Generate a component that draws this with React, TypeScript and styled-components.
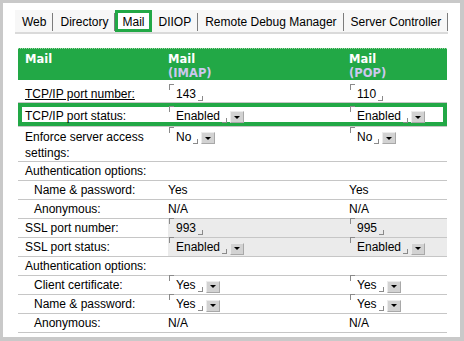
import styled, { createGlobalStyle } from 'styled-components';

const GlobalStyle = createGlobalStyle`
  html, body {
    margin: 0;
    padding: 0;
    background: #c8c8c8;
  }
  body {
    font-family: "Liberation Sans", Arial, sans-serif;
    color: #000;
  }
`;

const green = '#22a846';

const Frame = styled.div`
  width: 464px;
  height: 341px;
  box-sizing: border-box;
  border: 3px solid #c9c9c9;
  border-right-width: 4px;
  border-bottom: 4px solid #c9c9c9;
  background: #fff;
  overflow: hidden;
`;

const TabBar = styled.div`
  display: flex;
  margin: 7px 12px 0 12px;
  height: 22px;
  background: #f7f7f7;
  border-bottom: 2px solid #dadada;
`;

const Tab = styled.div<{ $active?: boolean }>`
  position: relative;
  display: flex;
  align-items: center;
  flex-shrink: 0;
  white-space: nowrap;
  padding: 2px 7px 0 7px;
  font-size: 12px;
  background: ${(p) => (p.$active ? '#fff' : 'transparent')};
  box-shadow: ${(p) => (p.$active ? `inset 0 0 0 3px ${green}` : 'none')};

  &::after {
    content: '';
    display: ${(p) => (p.$active ? 'none' : 'block')};
    position: absolute;
    right: 0;
    top: 3px;
    bottom: 1px;
    width: 1px;
    background: #7c7c7c;
  }
`;

const Table = styled.div`
  margin: 14px 13px 0 15px;
  display: flex;
  flex-direction: column;
`;

const HeaderRow = styled.div`
  display: grid;
  grid-template-columns: 150px 181px 1fr;
  height: 32px;
  box-sizing: border-box;
  background: ${green};
  border-top: 1px dotted #9ed6a8;
  padding-top: 3px;
  font-family: "DejaVu Sans", Verdana, sans-serif;
  font-weight: bold;
  font-size: 11.5px;
  line-height: 14px;
  color: #fff;
`;

const HeadCell = styled.div<{ $first?: boolean }>`
  padding-left: ${(p) => (p.$first ? '7px' : '0')};
`;

const Sub = styled.div`
  color: #ccc8ee;
`;

const Row = styled.div<{ $h?: number; $mark?: boolean; $top?: boolean; $pad?: number }>`
  display: grid;
  grid-template-columns: 150px 181px 1fr;
  height: ${(p) => p.$h ?? 19}px;
  box-sizing: border-box;
  align-items: ${(p) => (p.$top ? 'start' : 'center')};
  padding-top: ${(p) => p.$pad ?? 0}px;
  border-bottom: 1px solid #c6c6c6;
  font-size: 12px;
  line-height: 16px;
  box-shadow: ${(p) => (p.$mark ? `inset 0 0 0 4px ${green}` : 'none')};
`;

const Label = styled.div<{ $indent?: boolean; $link?: boolean }>`
  padding-left: ${(p) => (p.$indent ? '16px' : '7px')};
  text-decoration: ${(p) => (p.$link ? 'underline' : 'none')};
  white-space: nowrap;
`;

const Value = styled.div<{ $shade?: boolean; $top?: boolean }>`
  display: flex;
  align-items: ${(p) => (p.$top ? 'flex-start' : 'center')};
  height: 100%;
  white-space: nowrap;
  background: ${(p) => (p.$shade ? '#ebebeb' : 'transparent')};
`;

const Field = styled.span`
  position: relative;
  display: inline-block;
  padding: 0 8px 0 8px;
  line-height: 16px;

  &::before {
    content: '';
    position: absolute;
    left: 1px;
    top: -2px;
    width: 4px;
    height: 5px;
    border-left: 1px solid #8a8a8a;
    border-top: 1px solid #8a8a8a;
  }

  &::after {
    content: '';
    position: absolute;
    right: 1px;
    bottom: 1px;
    width: 4px;
    height: 4px;
    border-right: 1px solid #8a8a8a;
    border-bottom: 1px solid #8a8a8a;
  }
`;

const Drop = styled.span`
  display: inline-flex;
  align-items: center;
  justify-content: center;
  width: 12px;
  height: 10px;
  margin-left: 2px;
  margin-top: 3px;
  background: #d2d2d2;
  border: 1px solid #a8a8a8;
  border-top-color: #ececec;
  border-left-color: #ececec;

  &::after {
    content: '';
    border-left: 3px solid transparent;
    border-right: 3px solid transparent;
    border-top: 3px solid #000;
  }
`;

type Cell = { text?: string; field?: boolean; drop?: boolean };

type RowData = {
  label: React.ReactNode;
  indent?: boolean;
  link?: boolean;
  mark?: boolean;
  h?: number;
  pad?: number;
  top?: boolean;
  shade?: boolean;
  imap: Cell;
  pop: Cell;
};

const rows: RowData[] = [
  {
    label: 'TCP/IP port number:',
    link: true,
    h: 23,
    pad: 6,
    imap: { text: '143', field: true },
    pop: { text: '110', field: true },
  },
  {
    label: 'TCP/IP port status:',
    mark: true,
    h: 24,
    pad: 2,
    imap: { text: 'Enabled', field: true, drop: true },
    pop: { text: 'Enabled', field: true, drop: true },
  },
  {
    label: (
      <>
        Enforce server access
        <br />
        settings:
      </>
    ),
    h: 35,
    pad: 2,
    top: true,
    imap: { text: 'No', field: true, drop: true },
    pop: { text: 'No', field: true, drop: true },
  },
  { label: 'Authentication options:', imap: {}, pop: {} },
  { label: 'Name & password:', indent: true, imap: { text: 'Yes' }, pop: { text: 'Yes' } },
  { label: 'Anonymous:', indent: true, imap: { text: 'N/A' }, pop: { text: 'N/A' } },
  { label: 'SSL port number:', shade: true, imap: { text: '993', field: true }, pop: { text: '995', field: true } },
  {
    label: 'SSL port status:',
    shade: true,
    imap: { text: 'Enabled', field: true, drop: true },
    pop: { text: 'Enabled', field: true, drop: true },
  },
  { label: 'Authentication options:', imap: {}, pop: {} },
  {
    label: 'Client certificate:',
    indent: true,
    imap: { text: 'Yes', field: true, drop: true },
    pop: { text: 'Yes', field: true, drop: true },
  },
  {
    label: 'Name & password:',
    indent: true,
    imap: { text: 'Yes', field: true, drop: true },
    pop: { text: 'Yes', field: true, drop: true },
  },
  { label: 'Anonymous:', indent: true, imap: { text: 'N/A' }, pop: { text: 'N/A' } },
];

const tabs = ['Web', 'Directory', 'Mail', 'DIIOP', 'Remote Debug Manager', 'Server Controller'];

const renderCell = (c: Cell, shade?: boolean, top?: boolean) => (
  <Value $shade={shade} $top={top}>
    {c.field ? <Field>{c.text}</Field> : c.text}
    {c.drop && <Drop />}
  </Value>
);

export default function App() {
  return (
    <>
      <GlobalStyle />
      <Frame>
        <TabBar>
          {tabs.map((t) => (
            <Tab key={t} $active={t === 'Mail'}>
              {t}
            </Tab>
          ))}
        </TabBar>
        <Table>
          <HeaderRow>
            <HeadCell $first>Mail</HeadCell>
            <HeadCell>
              Mail
              <Sub>(IMAP)</Sub>
            </HeadCell>
            <HeadCell>
              Mail
              <Sub>(POP)</Sub>
            </HeadCell>
          </HeaderRow>
          {rows.map((r, i) => (
            <Row key={i} $h={r.h} $mark={r.mark} $top={r.top} $pad={r.pad}>
              <Label $indent={r.indent} $link={r.link}>
                {r.label}
              </Label>
              {renderCell(r.imap, r.shade, r.top)}
              {renderCell(r.pop, r.shade, r.top)}
            </Row>
          ))}
        </Table>
      </Frame>
    </>
  );
}
